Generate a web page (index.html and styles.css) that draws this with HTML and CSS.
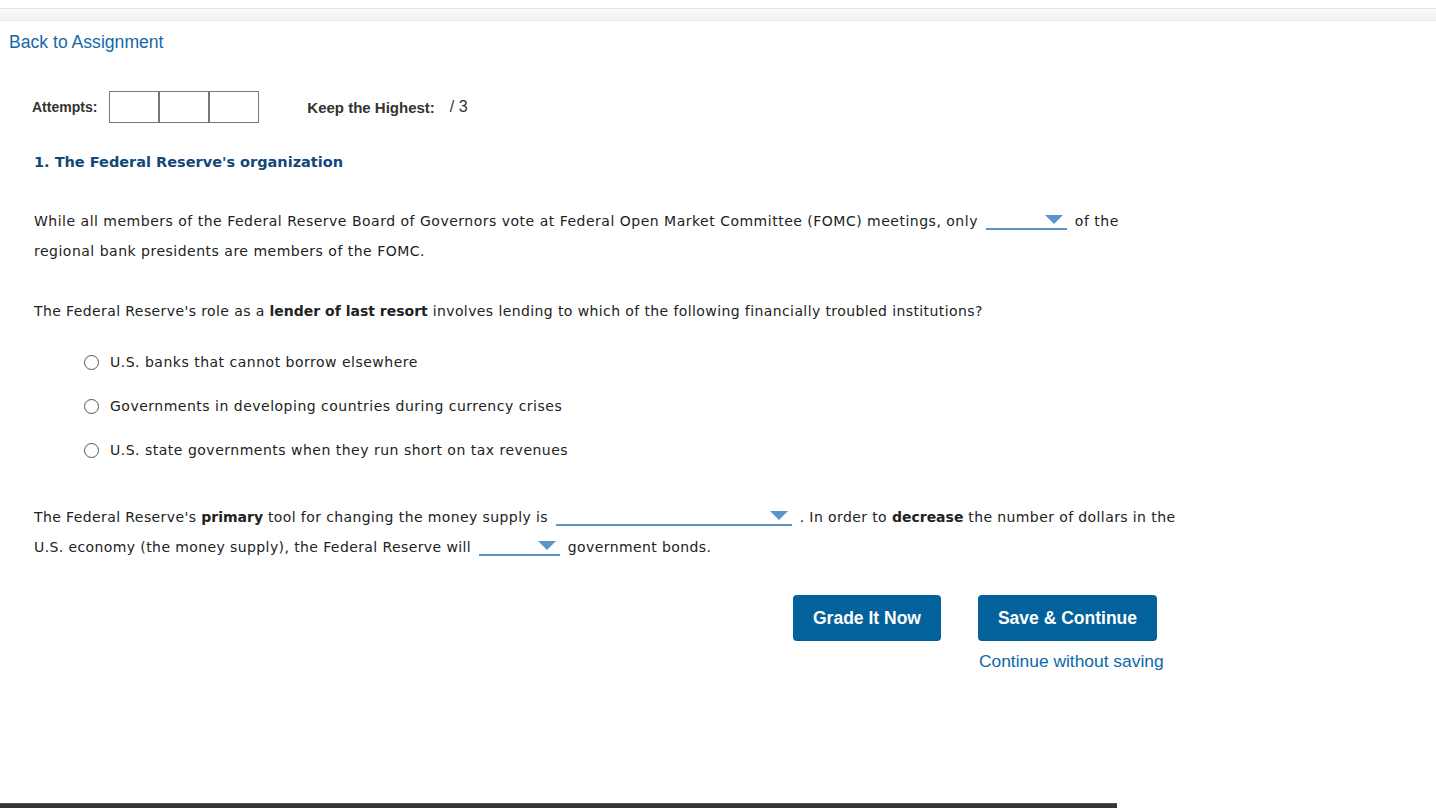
FILE: index.html
```html
<!DOCTYPE html>
<html>
<head>
    <meta charset="UTF-8">
    <meta name="viewport" content="width=device-width, initial-scale=1.0">
    <title>The Federal Reserve's organization</title>
    <link rel="stylesheet" href="styles.css">
</head>
<body>
    <div class="topbar"></div>

    <a class="back-link" href="#">Back to Assignment</a>

    <!-- Attempts row -->
    <div class="attempts">
        <span class="attempts-label">Attempts:</span>
        <div class="attempt-boxes">
            <span class="attempt-box"></span>
            <span class="attempt-box"></span>
            <span class="attempt-box"></span>
        </div>
        <span class="keep-label">Keep the Highest:</span>
        <span class="keep-score">/ 3</span>
    </div>

    <section class="question">
        <h2>1. The Federal Reserve's organization</h2>

        <p class="para first">While all members of the Federal Reserve Board of Governors vote at Federal Open Market Committee (FOMC) meetings, only <span class="dropdown small"><span class="caret"></span></span> of the regional bank presidents are members of the FOMC.</p>

        <p class="para">The Federal Reserve's role as a <b>lender of last resort</b> involves lending to which of the following financially troubled institutions?</p>

        <ul class="choices">
            <li><span class="radio"></span>U.S. banks that cannot borrow elsewhere</li>
            <li><span class="radio"></span>Governments in developing countries during currency crises</li>
            <li><span class="radio"></span>U.S. state governments when they run short on tax revenues</li>
        </ul>

        <p class="para">The Federal Reserve's <b>primary</b> tool for changing the money supply is <span class="dropdown wide"><span class="caret"></span></span> . In order to <b>decrease</b> the number of dollars in the U.S. economy (the money supply), the Federal Reserve will <span class="dropdown small"><span class="caret"></span></span> government bonds.</p>
    </section>

    <div class="actions">
        <button type="button" class="btn">Grade It Now</button>
        <div class="save-col">
            <button type="button" class="btn">Save &amp; Continue</button>
            <a class="skip-link" href="#">Continue without saving</a>
        </div>
    </div>

    <div class="bottombar"></div>
</body>
</html>
```

FILE: styles.css
```css
body {
    margin: 0;
    padding: 0;
    background-color: #fff;
    font-family: "DejaVu Sans", Verdana, sans-serif;
    color: #222;
}

.topbar {
    margin-top: 8px;
    height: 11px;
    border-top: 1px solid #e2e4e4;
    border-bottom: 1px solid #e6eaea;
    background: linear-gradient(#fbfcfc, #eff2f2);
}

.back-link {
    display: inline-block;
    margin: 11px 0 0 9px;
    font-family: "Liberation Sans", Arial, sans-serif;
    font-size: 17.6px;
    color: #1768a6;
    text-decoration: none;
}

.attempts {
    display: flex;
    align-items: center;
    margin: 38px 0 0 32px;
    font-family: "Liberation Sans", Arial, sans-serif;
    color: #333;
}

.attempts-label {
    font-size: 14px;
    font-weight: bold;
    margin-right: 12px;
}

.attempt-boxes {
    display: flex;
    border: 1px solid #777;
}

.attempt-box {
    width: 48px;
    height: 30px;
    border-left: 2px solid #777;
}

.attempt-box:first-child {
    border-left: none;
}

.keep-label {
    font-size: 15px;
    font-weight: bold;
    margin-left: 48px;
}

.keep-score {
    font-size: 16px;
    margin-left: 15px;
}

.question {
    margin: 0 0 0 34px;
    width: 1146px;
}

.question h2 {
    margin: 31px 0 0 0;
    font-size: 14.5px;
    font-weight: bold;
    color: #13477a;
}

.para {
    margin: 30px 0 0 0;
    font-size: 14px;
    letter-spacing: 0.4px;
    line-height: 30px;
}

.para b {
    letter-spacing: 0;
}

.para.first {
    margin-top: 36px;
    letter-spacing: 0.5px;
}

.dropdown {
    display: inline-block;
    position: relative;
    vertical-align: -4px;
    height: 16px;
    border-bottom: 2px solid #5b94c8;
    margin: 0 3px;
}

.dropdown.small {
    width: 81px;
}

.dropdown.wide {
    width: 236px;
}

.caret {
    position: absolute;
    right: 4px;
    top: 3px;
    width: 0;
    height: 0;
    border-left: 9px solid transparent;
    border-right: 9px solid transparent;
    border-top: 9px solid #5b94c8;
}

.choices {
    list-style: none;
    margin: 14px 0 0 0;
    padding: 0 0 0 50px;
    font-size: 14px;
    letter-spacing: 0.5px;
}

.choices li {
    display: flex;
    align-items: center;
    height: 44px;
}

.radio {
    width: 13px;
    height: 13px;
    border: 1px solid #555;
    border-radius: 50%;
    margin-right: 11px;
}

.actions {
    display: flex;
    margin: 33px 0 0 793px;
    gap: 37px;
}

.btn {
    height: 46px;
    padding: 0 20px;
    background-color: #03619b;
    color: #fff;
    border: none;
    border-radius: 4px;
    font-family: "Liberation Sans", Arial, sans-serif;
    font-size: 17.5px;
    font-weight: bold;
    cursor: pointer;
}

.save-col {
    display: flex;
    flex-direction: column;
    align-items: flex-start;
}

.skip-link {
    margin-top: 10px;
    margin-left: 1px;
    font-family: "Liberation Sans", Arial, sans-serif;
    font-size: 17.4px;
    color: #0b69a8;
    text-decoration: none;
}

.bottombar {
    position: fixed;
    left: 0;
    bottom: 0;
    width: 1117px;
    height: 4px;
    background-color: #333;
    border-top: 1px solid #555;
}
```
